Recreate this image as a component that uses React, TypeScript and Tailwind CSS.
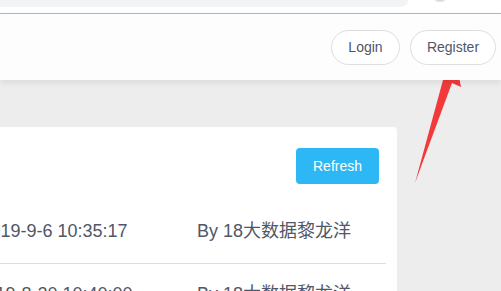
import React from "react";

const rows = [
    { time: "2019-9-6 10:35:17", author: "By 18大数据黎龙洋" },
    { time: "2019-8-20 10:40:00", author: "By 18大数据黎龙洋" },
];

function PillButton({ label, width }: { label: string; width: string }) {
    return (
        <button
            className={`${width} h-[35px] rounded-full border border-[#dcdee2] bg-white text-[14px] text-[#4f5768] leading-none`}
        >
            {label}
        </button>
    );
}

export default function App() {
    return (
        <div
            className="relative w-[501px] h-[291px] overflow-hidden bg-[#ededed]"
            style={{ fontFamily: '"Liberation Sans", Arial, "Noto Sans CJK SC", sans-serif' }}
        >
            {/* browser chrome strip */}
            <div className="flex items-start h-[13px] bg-white">
                <div className="w-[408px] h-[7px] bg-[#f1f3f4] rounded-br-[8px]" />
                <div className="ml-[24px] -mt-[14px] w-[16px] h-[16px] rounded-full bg-[#dcdcdc]" />
            </div>
            <div className="h-px bg-[#b5b5b5]" />

            {/* header */}
            <header className="relative z-10 h-[66px] bg-[#fdfdfd] flex items-center justify-end gap-[10px] pr-[5px] shadow-[0_3px_6px_rgba(0,0,0,0.07)]">
                <PillButton label="Login" width="w-[69px]" />
                <PillButton label="Register" width="w-[86px]" />
            </header>

            {/* content card */}
            <main className="pt-[47px]">
                <div className="ml-[-60px] w-[457px] bg-white rounded-[4px]">
                    <div className="flex justify-end pt-[21px] pr-[18px]">
                        <button className="w-[83px] h-[36px] rounded-[4px] bg-[#2db7f5] text-white text-[14px] leading-none">
                            Refresh
                        </button>
                    </div>
                    <ul className="mt-[17px] mr-[11px]">
                        {rows.map((r) => (
                            <li
                                key={r.time}
                                className="flex pt-[18px] pb-[20px] pl-[14px] border-b border-[#dcdee2] text-[18px] leading-[24px] text-[#4f5768] whitespace-nowrap"
                            >
                                <span className="w-[200px] text-center">{r.time}</span>
                                <span className="ml-[43px]">{r.author}</span>
                            </li>
                        ))}
                    </ul>
                </div>
            </main>

            {/* annotation arrow */}
            <svg
                className="absolute left-0 top-0 pointer-events-none"
                width="501"
                height="291"
                viewBox="0 0 501 291"
            >
                <polygon
                    points="456,61 461,87 452,83 415,183 443,80 435,78"
                    fill="#f23a3a"
                />
            </svg>
        </div>
    );
}
